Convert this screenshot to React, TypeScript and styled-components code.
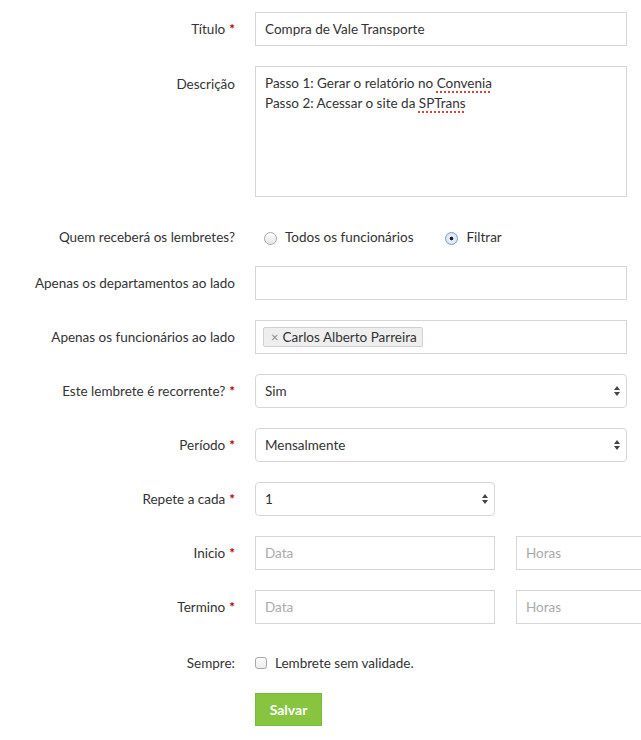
import * as React from "react";
import styled, { createGlobalStyle } from "styled-components";

const GlobalStyle = createGlobalStyle`
  html, body {
    margin: 0;
    padding: 0;
    background: #fff;
    overflow-x: hidden;
  }
  body {
    font-family: Lato, "Open Sans", sans-serif;
    font-size: 13.5px;
    color: #333;
  }
`;

const Form = styled.form`
  padding: 12px 14px 20px 0;
  width: 641px;
  box-sizing: border-box;
`;

const Row = styled.div<{ $top?: boolean; $pad?: number; $gap?: number }>`
  display: grid;
  grid-template-columns: 235px 1fr;
  column-gap: 20px;
  align-items: ${(p) => (p.$top ? "start" : "center")};
  padding-top: ${(p) => p.$pad || 0}px;
  margin-bottom: ${(p) => (p.$gap === undefined ? 20 : p.$gap)}px;
`;

const Label = styled.label<{ $top?: boolean }>`
  text-align: right;
  line-height: 20px;
  padding-top: ${(p) => (p.$top ? "8px" : "0")};
  white-space: nowrap;
`;

const Req = styled.span`
  color: #b20000;
  font-weight: bold;
  margin-left: 4px;
`;

const TextInput = styled.input<{ $width?: number }>`
  box-sizing: border-box;
  width: ${(p) => (p.$width ? `${p.$width}px` : "100%")};
  flex-shrink: 0;
  height: 34px;
  padding: 6px 9px;
  border: 1px solid #d6d6d6;
  border-radius: 0;
  font-family: inherit;
  font-size: 13.5px;
  color: #333;
  outline: none;
  &::placeholder {
    color: #aaa;
  }
`;

const TextArea = styled.div`
  box-sizing: border-box;
  width: 100%;
  height: 131px;
  padding: 6px 9px;
  border: 1px solid #d6d6d6;
  line-height: 20px;
`;

const Misspelled = styled.span`
  text-decoration: underline dotted #e0403a;
  text-decoration-thickness: 2px;
  text-underline-offset: 3px;
`;

const Options = styled.div`
  display: flex;
  align-items: center;
  height: 20px;
  padding-left: 9px;
`;

const RadioOption = styled.label`
  display: flex;
  align-items: center;
  margin-right: 32px;
`;

const RadioDot = styled.span<{ $checked?: boolean }>`
  box-sizing: border-box;
  width: 13px;
  height: 13px;
  border-radius: 50%;
  margin-right: 8px;
  margin-top: 3px;
  border: 1px solid ${(p) => (p.$checked ? "#7f9cc4" : "#a9a9a9")};
  background: ${(p) =>
    p.$checked
      ? "radial-gradient(circle, #222 0 1.6px, #e9f1fc 2.2px, #c9dcf3 100%)"
      : "linear-gradient(#fdfdfd, #e6e6e6)"};
`;

const TagBox = styled.div`
  box-sizing: border-box;
  width: 100%;
  height: 34px;
  border: 1px solid #d6d6d6;
  display: flex;
  align-items: center;
  padding: 0 7px;
`;

const Tag = styled.span`
  display: inline-flex;
  align-items: center;
  height: 20px;
  box-sizing: border-box;
  padding: 0 5px 0 7px;
  background: #eeeeee;
  border: 1px solid #d0d0d0;
  border-radius: 2px;
  line-height: 18px;
`;

const TagX = styled.span`
  color: #888;
  font-size: 13px;
  margin-right: 4px;
`;

const Select = styled.div<{ $width?: number }>`
  box-sizing: border-box;
  width: ${(p) => (p.$width ? `${p.$width}px` : "100%")};
  height: 34px;
  border: 1px solid #d6d6d6;
  border-radius: 4px;
  display: flex;
  align-items: center;
  justify-content: space-between;
  padding: 0 5px 0 9px;
`;

const Pair = styled.div`
  display: flex;
  gap: 21px;
`;

const CheckRow = styled.label`
  display: flex;
  align-items: center;
  height: 20px;
`;

const CheckBox = styled.span`
  box-sizing: border-box;
  width: 12px;
  height: 12px;
  border: 1px solid #a9a9a9;
  border-radius: 3px;
  background: linear-gradient(#fdfdfd, #ececec);
  margin-right: 8px;
`;

const SaveButton = styled.button`
  width: 67px;
  height: 33px;
  border: 1px solid #7cb93f;
  background: #87c540;
  color: #fff;
  font-family: inherit;
  font-weight: bold;
  font-size: 14px;
  padding: 0;
`;

const Arrows = () => (
  <svg width="8" height="12" viewBox="0 0 8 12">
    <path d="M4 1 L7 5 L1 5 Z" fill="#444" />
    <path d="M4 11 L7 7 L1 7 Z" fill="#444" />
  </svg>
);

const App = () => {
  return (
    <>
      <GlobalStyle />
      <Form onSubmit={(e) => e.preventDefault()}>
        <Row>
          <Label>
            Título<Req>*</Req>
          </Label>
          <TextInput defaultValue="Compra de Vale Transporte" />
        </Row>
        <Row $top>
          <Label $top>Descrição</Label>
          <TextArea>
            Passo 1: Gerar o relatório no <Misspelled>Convenia</Misspelled>
            <br />
            Passo 2: Acessar o site da <Misspelled>SPTrans</Misspelled>
          </TextArea>
        </Row>
        <Row $pad={10} $gap={19}>
          <Label>Quem receberá os lembretes?</Label>
          <Options>
            <RadioOption>
              <RadioDot />
              Todos os funcionários
            </RadioOption>
            <RadioOption>
              <RadioDot $checked />
              Filtrar
            </RadioOption>
          </Options>
        </Row>
        <Row>
          <Label>Apenas os departamentos ao lado</Label>
          <TextInput />
        </Row>
        <Row>
          <Label>Apenas os funcionários ao lado</Label>
          <TagBox>
            <Tag>
              <TagX>×</TagX>Carlos Alberto Parreira
            </Tag>
          </TagBox>
        </Row>
        <Row>
          <Label>
            Este lembrete é recorrente?<Req>*</Req>
          </Label>
          <Select>
            Sim
            <Arrows />
          </Select>
        </Row>
        <Row>
          <Label>
            Período<Req>*</Req>
          </Label>
          <Select>
            Mensalmente
            <Arrows />
          </Select>
        </Row>
        <Row>
          <Label>
            Repete a cada<Req>*</Req>
          </Label>
          <Select $width={240}>
            1
            <Arrows />
          </Select>
        </Row>
        <Row>
          <Label>
            Inicio<Req>*</Req>
          </Label>
          <Pair>
            <TextInput $width={240} placeholder="Data" />
            <TextInput $width={240} placeholder="Horas" />
          </Pair>
        </Row>
        <Row>
          <Label>
            Termino<Req>*</Req>
          </Label>
          <Pair>
            <TextInput $width={240} placeholder="Data" />
            <TextInput $width={240} placeholder="Horas" />
          </Pair>
        </Row>
        <Row $pad={9}>
          <Label>Sempre:</Label>
          <CheckRow>
            <CheckBox />
            Lembrete sem validade.
          </CheckRow>
        </Row>
        <Row>
          <span />
          <div>
            <SaveButton type="submit">Salvar</SaveButton>
          </div>
        </Row>
      </Form>
    </>
  );
};

export default App;
